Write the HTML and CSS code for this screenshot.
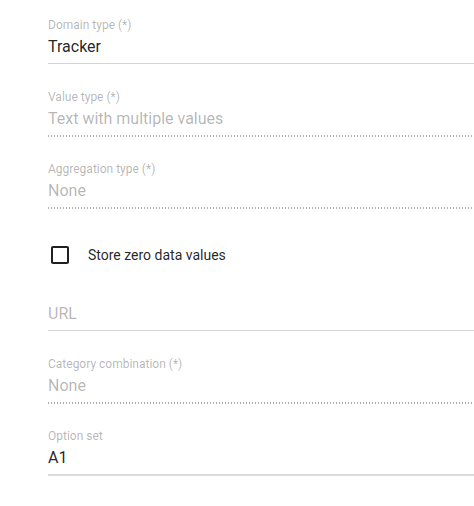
FILE: index.html
```html
<!DOCTYPE html>
<html lang="en">
<head>
<meta charset="utf-8">
<title>Data element form</title>
<link rel="stylesheet" href="styles.css">
</head>
<body>
<div class="form">
  <div class="field">
    <div class="label">Domain type (*)</div>
    <div class="value">Tracker</div>
    <div class="line solid"></div>
  </div>
  <div class="field">
    <div class="label">Value type (*)</div>
    <div class="value disabled">Text with multiple values</div>
    <div class="line dotted"></div>
  </div>
  <div class="field">
    <div class="label">Aggregation type (*)</div>
    <div class="value disabled">None</div>
    <div class="line dotted"></div>
  </div>
  <div class="check-block">
    <label class="check-row">
      <svg class="check-icon" viewBox="0 0 24 24" width="24" height="24"><path d="M19 5v14H5V5h14m0-2H5c-1.1 0-2 .9-2 2v14c0 1.1.9 2 2 2h14c1.1 0 2-.9 2-2V5c0-1.1-.9-2-2-2z"/></svg>
      <span class="check-label">Store zero data values</span>
    </label>
  </div>
  <div class="field">
    <div class="label empty"></div>
    <div class="value hint">URL</div>
    <div class="line solid"></div>
  </div>
  <div class="field">
    <div class="label">Category combination (*)</div>
    <div class="value disabled">None</div>
    <div class="line dotted"></div>
  </div>
  <div class="field">
    <div class="label">Option set</div>
    <div class="value">A1</div>
    <div class="line thick"></div>
  </div>
</div>
</body>
</html>
```

FILE: styles.css
```css
html, body {
  margin: 0;
  padding: 0;
  background: #ffffff;
}

body {
  font-family: Roboto, "Liberation Sans", Arial, sans-serif;
  color: rgba(0, 0, 0, 0.87);
}

.form {
  display: flex;
  flex-direction: column;
  padding-left: 48px;
}

.field {
  height: 72px;
  padding-top: 17px;
  box-sizing: border-box;
  display: flex;
  flex-direction: column;
}

.label {
  font-size: 12px;
  line-height: 16px;
  height: 16px;
  color: rgba(0, 0, 0, 0.3);
  white-space: nowrap;
}

.value {
  margin-top: 2px;
  font-size: 16px;
  line-height: 24px;
  height: 24px;
  color: rgba(0, 0, 0, 0.87);
  white-space: nowrap;
}

.value.disabled,
.value.hint {
  color: rgba(0, 0, 0, 0.3);
}

.line {
  margin-top: 4px;
  height: 1px;
}

.line.solid {
  background: #d4d4d4;
}

.line.thick {
  height: 2px;
  background: #dcdcdc;
}

.line.dotted {
  height: 2px;
  background-image: repeating-linear-gradient(to right, rgba(0, 0, 0, 0.32) 0, rgba(0, 0, 0, 0.32) 1.5px, transparent 1.5px, transparent 3px);
}

.check-block {
  height: 51px;
  padding-top: 27px;
  box-sizing: border-box;
}

.check-row {
  display: flex;
  align-items: center;
  height: 24px;
  gap: 16px;
}

.check-icon {
  display: block;
  fill: rgba(0, 0, 0, 0.87);
}

.check-label {
  font-size: 14px;
  line-height: 24px;
  color: rgba(0, 0, 0, 0.87);
}
```
